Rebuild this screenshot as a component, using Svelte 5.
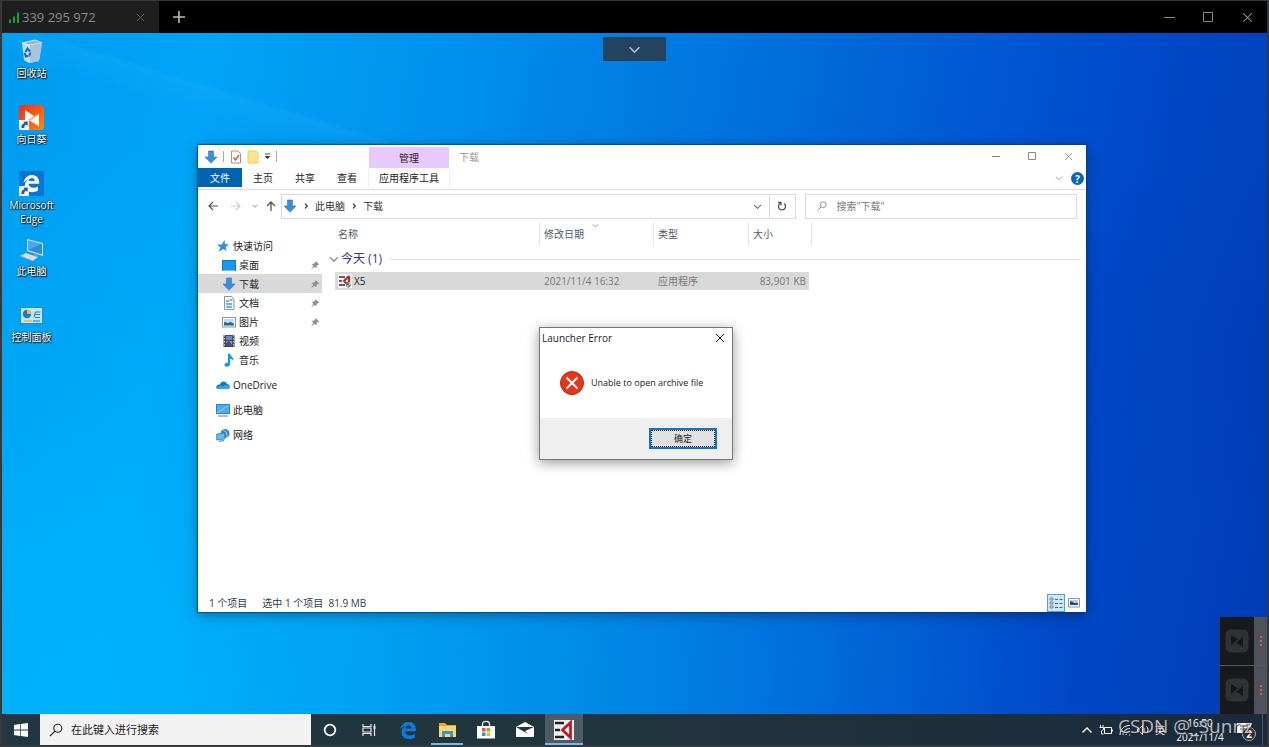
<script>
  const ribbonTabs = ['主页', '共享', '查看'];
  const desktopItems = [
    { icon: 'bin', label: '回收站' },
    { icon: 'sunflower', label: '向日葵' },
    { icon: 'edgeTile', label: 'Microsoft Edge' },
    { icon: 'laptop', label: '此电脑' },
    { icon: 'panel', label: '控制面板' }
  ];
  const quickItems = [
    { icon: 'desk', label: '桌面', pin: true },
    { icon: 'down', label: '下载', pin: true, active: true },
    { icon: 'doc', label: '文档', pin: true },
    { icon: 'pic', label: '图片', pin: true },
    { icon: 'video', label: '视频' },
    { icon: 'music', label: '音乐' }
  ];
  const rootItems = [
    { icon: 'cloud', label: 'OneDrive' },
    { icon: 'pc', label: '此电脑' },
    { icon: 'net', label: '网络' }
  ];
  const taskItems = [
    { icon: 'cortana', label: 'Cortana' },
    { icon: 'taskview', label: '任务视图' },
    { icon: 'edge', label: 'Microsoft Edge' },
    { icon: 'folder', label: '文件资源管理器', state: 'open' },
    { icon: 'store', label: 'Microsoft Store' },
    { icon: 'mail', label: '邮件' },
    { icon: 'x5', label: 'X5', state: 'current' }
  ];
  const files = [{ name: 'X5', date: '2021/11/4 16:32', type: '应用程序', size: '83,901 KB' }];
</script>

{#snippet chevron(size, dir)}
  <svg width={size} height={size} viewBox="0 0 12 12" fill="none" stroke="currentColor" stroke-width="1.4" aria-hidden="true">
    {#if dir === 'down'}<path d="M1.5 4l4.500 4.500L10.500 4" />
    {:else if dir === 'up'}<path d="M1.500 8.500L6 4l4.500 4.500" />
    {:else}<path d="M4.500 2.500L8 6l-3.500 3.500" stroke-width="1.800" />{/if}
  </svg>
{/snippet}

{#snippet cross(size)}
  <svg width={size} height={size} viewBox="0 0 10 10" fill="none" stroke="currentColor" aria-hidden="true"><path d="M1 1l8 8M9 1L1 9" /></svg>
{/snippet}

{#snippet glass(size)}
  <svg width={size} height={size} viewBox="0 0 14 14" fill="none" stroke="currentColor" stroke-width="1.1" aria-hidden="true"><circle cx="8.800" cy="5.200" r="4" /><path d="M6 8L1 13" /></svg>
{/snippet}

{#snippet downArrow(size)}
  <svg width={size} height={size} viewBox="0 0 14 14" aria-hidden="true"><path d="M4.500 1h5v6h3.500L7 13.300 1 7h3.500z" fill="#3a8edb" stroke="#2877c4" stroke-width=".6" /></svg>
{/snippet}

{#snippet shortcut()}
  <rect x="0" y="15" width="10" height="10" fill="#f3f5f8" /><path d="M2.500 23c-.5-3 1-4.500 3-4.800l-1-1.400 4.300-.2-.3 4.400-1.200-1.200c-1.600.2-2.200 1.200-2 3.200z" fill="#2456a5" />
{/snippet}

{#snippet fileIcon(size)}
  <svg width={size} height={size} viewBox="0 0 20 20" aria-hidden="true">
    <rect width="20" height="20" fill="#f4f0f0" />
    <path d="M1 3h9M1 10h5M1 17h9" stroke="#222" stroke-width="2.600" />
    <path d="M16.500 2.500v15L8.500 10z" fill="none" stroke="#b5202b" stroke-width="2.800" />
  </svg>
{/snippet}

{#snippet deskIcon(name)}
  <svg width="25" height="25" viewBox="0 0 25 25" aria-hidden="true">
    {#if name === 'bin'}
      <path d="M3 4l13-3 7 3-3 18-10 2-5-3z" fill="#c3dced" /><path d="M3 4l13-3 7 3-12 2z" fill="#8fb8d2" stroke="#e9f4fb" stroke-width=".8" /><path d="M11 6l12-2-3 18-9 2z" fill="#a9c6d9" />
      <path d="M6.500 13l2-3.500 2.500 3M5.500 14l1.500 3.500 2-.5M11.500 13.500l-1.500 4" fill="none" stroke="#1769c2" stroke-width="2" />
    {:else if name === 'sunflower'}
      <defs><linearGradient id="sun" x2="1" y2="1"><stop stop-color="#f02c18" /><stop offset="1" stop-color="#ff8a0c" /></linearGradient></defs>
      <rect width="25" height="25" rx="4" fill="url(#sun)" /><path d="M6 5l9 6-9 6z" fill="#fff" /><path d="M20 9v12l-9-5z" fill="#fff" /><path d="M7 16l12-7-7 7z" fill="#ffbfa6" />
      {@render shortcut()}
    {:else if name === 'edgeTile'}
      <rect width="25" height="25" fill="#0875d3" /><path d="M4.500 12C5.500 6.500 9 4 13 4c5 0 7.500 4 7.200 8.800H9.500c.2 4.500 6 5 9.500 2.800v4c-5 3-13 2-13.200-4.500-.1-3.400 1.700-5.700 4-6.800-2.500.6-4.200 1.900-5.300 3.700zm5.200-2h6.100c-.1-4-5.500-3.800-6.100 0z" fill="#fff" />
      {@render shortcut()}
    {:else if name === 'laptop'}
      <path d="M8 2l16 4v13L8 14z" fill="#cfe3ef" /><path d="M9 3.300l14 3.500v10.500L9 13z" fill="#4ba8ee" /><path d="M9 13L23 6.800v10.500z" fill="#2f8cdb" /><path d="M15 16l4 1v3l-4-1z" fill="#819aa9" /><path d="M1 19l6-3 12 4-5 4z" fill="#d7dfe3" stroke="#8ca1ae" stroke-width=".6" />
    {:else}
      <rect x="1.500" y="4.500" width="22" height="16" fill="#bce7fa" stroke="#3388b9" /><circle cx="8" cy="11" r="4.200" fill="#1979cd" /><path d="M8 11V6.800a4.200 4.200 0 0 1 4.200 4.200z" fill="#f5b92e" /><path d="M15 14l1.500-5h5M16 11.500h5M16 14.500h5" stroke="#347ba9" fill="none" /><path d="M5 18h8" stroke="#f5b92e" stroke-width="1.500" /><path d="M14 18h7" stroke="#1979cd" />
    {/if}
  </svg>
{/snippet}

{#snippet navIcon(name)}
  <svg width="14" height="14" viewBox="0 0 14 14" aria-hidden="true">
    {#if name === 'star'}<path d="M8.500 1l.5 4 4 .5-3.300 2.500 1 4-3.400-2L2.500 13l2-4.500L1 5.800l4.800-.3z" fill="#2e91dc" />
    {:else if name === 'desk'}<rect x=".5" y="2.500" width="13" height="10" fill="#1898ee" stroke="#0d78c9" /><path d="M1 12.500h12" stroke="#63c5ff" />
    {:else if name === 'down'}<path d="M4.500 1h5v6h3.500L7 13.300 1 7h3.500z" fill="#3a8edb" stroke="#2877c4" stroke-width=".6" />
    {:else if name === 'doc'}<path d="M2.500.5h7l2.500 3v10H2.500z" fill="#fff" stroke="#87949d" /><path d="M4 5h3M4 8h6M4 11h6M7.500 4h3" stroke="#3b9ad6" stroke-width="1.400" />
    {:else if name === 'pic'}<rect x=".5" y="2.500" width="13" height="9.500" fill="#fff" stroke="#89969f" /><path d="M2 4h10v6.500H2z" fill="#b9dff4" /><path d="M2 7l4 1 3-1 3 2v1.500H2z" fill="#27678e" />
    {:else if name === 'video'}<rect x="1.500" y="1" width="11" height="12" fill="#444854" /><path d="M2.500 1v12M11.500 1v12" stroke="#bfc5ce" stroke-dasharray="1.500 1.500" /><path d="M4 2h6v4H4z" fill="#5c8bd0" /><path d="M4 7h6v5H4z" fill="#c48f47" /><path d="M4 9l3-2 3 4v1H4z" fill="#364ea0" />
    {:else if name === 'music'}<path d="M6 .5h2c0 3 4.500 3.500 3.300 7.500C10.800 6.500 9.500 6 8 5.800V11c0 3.500-5.500 3.500-5.500 1 0-1.900 2-2.500 3.500-2z" fill="#1497e3" />
    {:else if name === 'cloud'}<path d="M1 11c-2-3 1-5 3-4.500C5 2.500 10 2.500 11 6c3 0 3.500 4 1.500 5z" fill="#0b73c9" /><path d="M1 11c0-3 4-4 6-2.500C9 6 14 7 13.500 10c0 1-1 1-1 1z" fill="#35a4eb" />
    {:else if name === 'pc'}<rect x=".5" y="1.500" width="13" height="9" fill="#45b1f3" stroke="#3b7da9" /><path d="M1 10L13 2" stroke="#82d0ff" /><path d="M2 13h10" stroke="#8a98a1" stroke-width="1.300" />
    {:else}<circle cx="9" cy="5.500" r="4.500" fill="#3a87c4" /><path d="M7 2c3 1 4 3 4 7" stroke="#a5d6f2" fill="none" /><path d="M.7 6l8-1v6l-8 1z" fill="#5ec0f1" stroke="#2e7eaf" stroke-width=".8" /><path d="M3 13.300l5-.7" stroke="#60717d" />{/if}
  </svg>
{/snippet}

{#snippet pinIcon()}
  <svg class="pin" width="10" height="10" viewBox="0 0 10 10" aria-hidden="true"><path d="M5.500 1L9.300 4.500 7.800 5 6.500 6.500 6.300 8.500 4.400 6.800 1 9.500 3.300 5.800 1.500 4l2-.3L5.200 2.500z" fill="#8b9298" /></svg>
{/snippet}

{#snippet taskIcon(name)}
  {#if name === 'x5'}{@render fileIcon(20)}
  {:else}
  <svg width="20" height="20" viewBox="0 0 20 20" fill="none" aria-hidden="true">
    {#if name === 'cortana'}<circle cx="10" cy="10" r="5.300" stroke="#f2f5f6" stroke-width="1.800" />
    {:else if name === 'taskview'}<path d="M4 4v2.500h8V4M4 16v-2.500h8V16M4 8h8v4H4zM15.500 4v2M15.500 9v7" stroke="#e6eaec" stroke-width="1.200" /><path d="M14.500 6h2v3h-2z" fill="#e6eaec" />
    {:else if name === 'edge'}<path d="M2 9.500C3 4.500 6.500 2 10.500 2c5.300 0 7.800 4 7.300 9.200H7c.2 4.800 6.300 5.100 9.800 2.800v3.800C11.500 20.500 3.500 19 3.500 12.500c0-3.300 1.700-5.500 4-6.500-2.500.6-4.400 1.800-5.500 3.500zM7.200 8.500h6.300c0-4.200-5.700-4.200-6.300 0z" fill="#0b7bdc" />
    {:else if name === 'folder'}<path d="M2 3h6l2 2h9v12H2z" fill="#e5a82e" /><path d="M2 6h17v11H2z" fill="#ffd66e" /><path d="M5 17v-6h11v6h-3v-3H8v3z" fill="#3d92d4" />
    {:else if name === 'store'}<path d="M6.500 6V4c0-3.500 7-3.500 7 0v2" stroke="#eee" stroke-width="1.300" /><path d="M1 6h18v12.500H1z" fill="#fff" /><path d="M6 8h3.500v3.500H6z" fill="#ed5331" /><path d="M10.500 8H14v3.500h-3.500z" fill="#7db928" /><path d="M6 12.500h3.500V16H6z" fill="#18a0e1" /><path d="M10.500 12.500H14V16h-3.500z" fill="#f6b81c" />
    {:else}<path d="M1 7l9-5 9 5v10H1z" fill="#fff" /><path d="M1 7h18l-9 4 3 3z" fill="#25343d" />{/if}
  </svg>
  {/if}
{/snippet}

{#snippet remoteLogo()}
  <svg width="24" height="24" viewBox="0 0 24 24" aria-hidden="true"><rect x=".5" y=".5" width="23" height="23" rx="5" fill="#303235" /><path d="M6 6l8 5-8 7zM18 6v12l-8-5z" fill="#141618" /><path d="M6 17L18 7" stroke="#303235" stroke-width="1.500" /></svg>
{/snippet}

<div class="client">
  <header class="session-bar">
    <div class="session">
      <svg width="12" height="12" viewBox="0 0 12 12" aria-hidden="true"><path d="M2 12V8.500M6 12V5.500M10 12V1.500" stroke="#12b52c" stroke-width="1.800" /></svg>
      <span>339 295 972</span>
      <button class="close-tab" aria-label="关闭会话">{@render cross(9)}</button>
    </div>
    <button class="add" aria-label="新建会话"><svg width="12" height="12" viewBox="0 0 12 12" stroke="#bbb" stroke-width="1.600" aria-hidden="true"><path d="M6 0v12M0 6h12" /></svg></button>
    <div class="frame-controls">
      <button aria-label="最小化"><svg width="11" height="11" viewBox="0 0 11 11" stroke="currentColor" aria-hidden="true"><path d="M0 5.500h11" /></svg></button>
      <button aria-label="最大化"><svg width="11" height="11" viewBox="0 0 11 11" fill="none" stroke="currentColor" aria-hidden="true"><path d="M.5.5h9v9h-9z" /></svg></button>
      <button aria-label="关闭">{@render cross(11)}</button>
    </div>
  </header>

  <main class="desktop">
    <div class="shortcuts">
      {#each desktopItems as item}
        <button class="shortcut">{@render deskIcon(item.icon)}<span>{item.label}</span></button>
      {/each}
    </div>

    <button class="toolbar-handle" aria-label="展开工具栏">{@render chevron(13, 'down')}</button>

    <section class="explorer" aria-label="下载">
      <div class="caption">
        <div class="quick-tools">
          {@render downArrow(14)}
          <i></i>
          <button aria-label="属性"><svg width="12" height="14" viewBox="0 0 12 14" fill="none" aria-hidden="true"><path d="M1.500 1h6.500l2.500 2.500v9.500h-9z" fill="#fff" stroke="#999" /><path d="M3.500 7.500l2 2.500L9 5" stroke="#db5a34" stroke-width="1.400" /></svg></button>
          <button aria-label="新建文件夹"><svg width="12" height="14" viewBox="0 0 12 14" aria-hidden="true"><path d="M1 1h8l2 2v10H1z" fill="#fce58b" stroke="#edcc62" /></svg></button>
          <button aria-label="自定义快速访问工具栏"><svg width="7" height="7" viewBox="0 0 7 7" aria-hidden="true"><path d="M1 1h5M1.500 3.500h4l-2 2z" stroke="#222" fill="#222" stroke-width=".8" /></svg></button>
          <i></i>
        </div>
        <div class="context">管理</div>
        <h1>下载</h1>
        <div class="window-controls">
          <button aria-label="最小化"><svg width="9" height="9" viewBox="0 0 9 9" stroke="currentColor" aria-hidden="true"><path d="M0 4.500h8" /></svg></button>
          <button aria-label="最大化"><svg width="9" height="9" viewBox="0 0 9 9" fill="none" stroke="currentColor" aria-hidden="true"><path d="M.5.5h7v7h-7z" /></svg></button>
          <button aria-label="关闭">{@render cross(9)}</button>
        </div>
      </div>
      <nav class="ribbon" aria-label="功能区">
        <button class="file">文件</button>
        {#each ribbonTabs as tab}<button>{tab}</button>{/each}
        <button class="app-tools">应用程序工具</button>
        <button class="collapse" aria-label="展开功能区">{@render chevron(8, 'down')}</button>
        <button class="help" aria-label="帮助">?</button>
      </nav>
      <div class="address-row">
        <div class="history">
          <button aria-label="后退"><svg width="10" height="10" viewBox="0 0 10 10" fill="none" stroke="#555" stroke-width="1.200" aria-hidden="true"><path d="M10 5H1M5 1L1 5l4 4" /></svg></button>
          <button aria-label="前进"><svg width="10" height="10" viewBox="0 0 10 10" fill="none" stroke="#ccc" stroke-width="1.200" aria-hidden="true"><path d="M0 5h9M5 1l4 4-4 4" /></svg></button>
          <button class="recent" aria-label="最近位置">{@render chevron(6, 'down')}</button>
          <button aria-label="上移"><svg width="10" height="10" viewBox="0 0 10 10" fill="none" stroke="#555" stroke-width="1.300" aria-hidden="true"><path d="M5 10V1M1 5l4-4 4 4" /></svg></button>
        </div>
        <div class="path">
          {@render downArrow(14)}
          {@render chevron(8, 'right')}
          <button>此电脑</button>
          {@render chevron(8, 'right')}
          <button>下载</button>
          <button class="drop" aria-label="以前的位置">{@render chevron(9, 'down')}</button>
          <button class="refresh" aria-label="刷新"><svg width="10" height="10" viewBox="0 0 10 10" fill="none" stroke="#555" stroke-width="1.300" aria-hidden="true"><path d="M7 2.500a3.500 3.500 0 1 1-4 0M1 1.500h3v3" /></svg></button>
        </div>
        <label class="find">{@render glass(10)}<input aria-label="搜索下载" placeholder={'搜索"下载"'} /></label>
      </div>
      <div class="body">
        <nav class="tree" aria-label="导航窗格">
          <a href="#quick">{@render navIcon('star')}快速访问</a>
          {#each quickItems as item}
            <a href="#{item.icon}" class="child" class:active={item.active}>{@render navIcon(item.icon)}{item.label}{#if item.pin}{@render pinIcon()}{/if}</a>
          {/each}
          {#each rootItems as item}
            <a href="#{item.icon}" class="root">{@render navIcon(item.icon)}{item.label}</a>
          {/each}
        </nav>
        <table>
          <colgroup><col class="c-name" /><col class="c-date" /><col class="c-type" /><col class="c-size" /><col /></colgroup>
          <thead><tr><th>名称</th><th class="sorted">修改日期<span>{@render chevron(7, 'down')}</span></th><th>类型</th><th>大小</th><td></td></tr></thead>
          <tbody>
            <tr class="group"><th colspan="5"><div>{@render chevron(10, 'down')}<span>今天 (1)</span><hr /></div></th></tr>
            {#each files as file}
              <tr class="file-row">
                <td><div>
                  <svg width="14" height="14" viewBox="0 0 14 14" aria-hidden="true"><path d="M0 0h14v14H0z" fill="#f5f2f2" /><path d="M1 3h6M1 7h3M1 11h6" stroke="#333" stroke-width="1.600" /><path d="M11 2v8M11 2L6 7l3 3" fill="none" stroke="#c6202e" stroke-width="2" /><path d="M8 8h5v3l-2.500 3L8 12z" fill="#2372c5" /><path d="M10.500 8H13v3h-2.500zM8 11h2.500v3z" fill="#f3bf2d" /></svg>
                  {file.name}
                </div></td>
                <td>{file.date}</td><td>{file.type}</td><td>{file.size}</td><td></td>
              </tr>
            {/each}
          </tbody>
        </table>
      </div>
      <footer class="status">
        <span>1 个项目</span><span>选中 1 个项目&nbsp; 81.9 MB</span>
        <div>
          <button class="on" aria-label="详细信息"><svg width="14" height="12" viewBox="0 0 14 12" stroke="#4c6878" fill="none" aria-hidden="true"><path d="M1 1h3v2H1zM1 5h3v2H1zM1 9h3v2H1z" stroke-width=".7" /><path d="M6 2.500h3M10.500 2.500h3M6 6.500h3M10.500 6.500h3M6 10.500h3M10.500 10.500h3" /></svg></button>
          <button aria-label="大图标"><svg width="12" height="10" viewBox="0 0 12 10" aria-hidden="true"><path d="M.5.5h11v8.500H.5z" fill="#fff" stroke="#8d949a" /><path d="M2 2h8v5H2z" fill="#a9d2f0" /><path d="M2 3l3 1 1 1h4v2H2z" fill="#244d80" /></svg></button>
        </div>
      </footer>
    </section>

    <div class="dialog" role="alertdialog" aria-labelledby="dialog-title" aria-describedby="dialog-text">
      <div class="dialog-head"><h2 id="dialog-title">Launcher Error</h2><button aria-label="关闭">{@render cross(10)}</button></div>
      <div class="dialog-body">
        <svg width="26" height="26" viewBox="0 0 26 26" aria-hidden="true"><circle cx="13" cy="13" r="11.500" fill="#ea3418" stroke="#a92c1c" /><path d="M7.500 7.500l11 11M18.500 7.500l-11 11" stroke="#fff" stroke-width="2" /></svg>
        <p id="dialog-text">Unable to open archive file</p>
      </div>
      <div class="dialog-foot"><button>确定</button></div>
    </div>

    <aside class="remote-tools">
      {#each [1, 2] as n}
        <div class="remote"><button aria-label="远程会话 {n}">{@render remoteLogo()}</button><span><b></b><b></b><b></b></span></div>
      {/each}
    </aside>
  </main>

  <footer class="taskbar">
    <button class="start" aria-label="开始"><svg width="14" height="14" viewBox="0 0 14 14" fill="#fff" aria-hidden="true"><path d="M0 2l6-.9v5.500H0zM6.700 1L14 0v6.600H6.700zM0 7.400h6v5.500L0 12zM6.700 7.400H14V14l-7.300-1z" /></svg></button>
    <label class="task-search">{@render glass(14)}<input aria-label="搜索" placeholder="在此键入进行搜索" /></label>
    <div class="apps">
      {#each taskItems as item}<button class={item.state} aria-label={item.label}>{@render taskIcon(item.icon)}</button>{/each}
    </div>
    <div class="tray">
      <button aria-label="显示隐藏的图标">{@render chevron(12, 'up')}</button>
      <svg width="14" height="12" viewBox="0 0 14 12" fill="none" stroke="currentColor" aria-hidden="true"><path d="M5.500 3.500h7v6h-7zM13.500 5.500v2M1.500 1v2M4 1v2M.5 3.500h4v2l-2 1.500v3h2" /></svg>
      <svg width="12" height="12" viewBox="0 0 12 12" fill="none" stroke="currentColor" aria-hidden="true"><path d="M1 11C1 5 5 1.500 11 1.500M4 11c0-4 3-6.500 7-6.500M7 11c0-2 2-3.500 4-3.500M10 11h1" /></svg>
      <svg width="12" height="12" viewBox="0 0 12 12" fill="none" stroke="currentColor" aria-hidden="true"><path d="M.5 4.500h2l3-3v9l-3-3h-2zM7.500 4v4M9.500 2.500c2 2 2 5 0 7" /></svg>
      <span class="ime">英</span>
      <time>16:50<br />2021/11/4</time>
      <button class="notes" aria-label="2 条新通知"><svg width="15" height="14" viewBox="0 0 15 14" aria-hidden="true"><path d="M0 0h14v10H8l-3 3v-3H0z" fill="#fff" /><path d="M3 3h8M3 6h8" stroke="#203341" /></svg><b>2</b></button>
      <button class="show-desktop" aria-label="显示桌面"></button>
    </div>
    <div class="watermark">CSDN @_Sunnz</div>
  </footer>
</div>

<style>
  :global(body) { margin: 0; background: #000; }
  .client, .client * { box-sizing: border-box; }
  .client {
    min-height: 100vh; display: flex; flex-direction: column; overflow: hidden;
    border: solid #36393c; border-width: 1px 2px 2px;
    font: 10px/14px "Open Sans", "Noto Sans CJK SC", sans-serif; color: #222;
  }
  button { font: inherit; color: inherit; background: none; border: 0; padding: 0; margin: 0; display: flex; align-items: center; justify-content: center; }
  input { font: inherit; color: inherit; background: none; border: 0; padding: 0; min-width: 0; flex: 1; outline: 0; }
  svg { flex: none; display: block; }
  h1, h2, p { margin: 0; font: inherit; }
  a { color: inherit; text-decoration: none; }

  .session-bar { height: 32px; display: flex; background: #000; color: #8b8b8b; }
  .session { width: 157px; display: flex; align-items: center; gap: 2px; padding: 0 14px 0 6px; background: #1e1e1e; font-size: 13px; line-height: 18px; }
  .close-tab { margin-left: auto; color: #666; }
  .add { width: 40px; }
  .frame-controls { margin-left: auto; display: flex; color: #888; }
  .frame-controls button { width: 39px; }

  .desktop {
    flex: 1; position: relative; min-height: 640px; overflow: hidden;
    background:
      linear-gradient(197deg, transparent 39%, rgba(120, 210, 255, .07) 40%, transparent 46%) 0 0 / 50% 40% no-repeat,
      radial-gradient(ellipse at 0% 100%, rgba(0, 190, 255, .6), transparent 60%),
      radial-gradient(ellipse at 100% 45%, rgba(0, 35, 150, .08), transparent 35%),
      linear-gradient(100deg, #009cf0 0%, #00a4f8 15%, #0092ee 32%, #0078e0 50%, #005cd4 69%, #004aca 82%, #003bb6 100%);
  }
  .shortcuts { width: 59px; padding-top: 6px; display: grid; grid-auto-rows: 66px; }
  .shortcut { flex-direction: column; justify-content: flex-start; gap: 2px; color: #fff; text-shadow: 1px 1px 1px #000, 0 0 2px #000; }
  .toolbar-handle { position: absolute; top: 4px; left: 50%; width: 63px; height: 24px; margin-left: -32px; background: #24435f; color: #b9c5cf; }

  .explorer { position: absolute; top: 112px; left: 196px; right: 181px; bottom: 102px; display: flex; flex-direction: column; background: #fff; box-shadow: 0 0 1px 1px rgba(0, 60, 110, .6), 0 3px 12px rgba(0, 0, 0, .35); }
  .caption { height: 23px; display: flex; align-items: center; }
  .quick-tools { width: 171px; display: flex; align-items: center; gap: 5px; padding-left: 6px; }
  .quick-tools i { width: 1px; height: 11px; margin-right: 1px; background: #aaa; }
  .context { width: 80px; align-self: stretch; margin-top: 2px; display: grid; place-items: center; background: #e7c9fb; }
  h1 { margin-left: 10px; color: #9a9a9a; }
  .window-controls { margin-left: auto; display: flex; color: #888; }
  .window-controls button { width: 36px; height: 20px; }
  .ribbon { height: 22px; display: flex; border-bottom: 1px solid #dadbdc; }
  .ribbon button { width: 42px; height: 19px; }
  .ribbon .file { width: 44px; background: #0063b1; color: #fff; }
  .ribbon .app-tools { width: 82px; border: solid #eee; border-width: 0 1px; }
  .ribbon .collapse { width: 20px; margin-left: auto; color: #999; }
  .ribbon .help { width: 13px; height: 13px; margin: 4px 2px 0; border-radius: 50%; background: #0b65b9; color: #fff; font-weight: 700; }
  .address-row { height: 32px; display: flex; align-items: center; padding-right: 9px; }
  .history { width: 83px; display: flex; align-items: center; gap: 13px; padding-left: 10px; color: #666; }
  .history .recent { margin: 0 -5px 0 -2px; }
  .path { flex: 1; height: 25px; display: flex; align-items: center; gap: 5px; border: 1px solid #d9d9d9; padding-left: 1px; color: #333; }
  .path .drop { margin: 0 2px 0 auto; color: #555; }
  .path .refresh { width: 26px; align-self: stretch; border-left: 1px solid #d9d9d9; }
  .find { width: 31%; height: 25px; margin-left: 9px; display: flex; align-items: center; gap: 10px; padding-left: 11px; border: 1px solid #d9d9d9; color: #777; }
  input::placeholder { color: inherit; opacity: 1; }

  .body { flex: 1; display: flex; min-height: 0; }
  .tree { width: 124px; padding-top: 14px; }
  .tree a { height: 19px; display: flex; align-items: center; gap: 3px; padding-left: 18px; }
  .tree .child { padding: 0 2px 0 24px; }
  .tree .active { background: #d9d9d9; }
  .tree .root { margin-top: 6px; }
  .pin { margin-left: auto; }
  table { flex: 1; align-self: flex-start; width: 0; margin: 0 5px 0 7px; table-layout: fixed; border-collapse: separate; border-spacing: 0; }
  .c-name { width: 211px; } .c-date { width: 114px; } .c-type { width: 95px; } .c-size { width: 63px; }
  th, td { padding: 0 0 0 4px; text-align: left; font-weight: 400; }
  thead th { height: 24px; color: #4e5b68; border-right: 1px solid #e5e5e5; position: relative; }
  thead th:first-child { padding-left: 9px; }
  .sorted span { position: absolute; left: 52px; top: 0; color: #888; }
  .group th { height: 26px; padding: 0; font-size: 12px; line-height: 16px; color: #34358b; }
  .group div { display: flex; align-items: center; gap: 2px; }
  .group svg { color: #777; }
  hr { flex: 1; height: 1px; margin: 0 0 0 6px; border: 0; background: #e3e3e3; }
  .file-row td { height: 18px; background: #d9d9d9; color: #777; }
  .file-row td:first-child { border-left: 6px solid #fff; padding-left: 3px; color: #222; }
  .file-row td:first-child div { display: flex; align-items: center; gap: 2px; }
  .file-row td:nth-child(4) { text-align: right; padding-right: 3px; border-right: 3px solid #fff; }
  .file-row td:last-child { background: none; }
  .status { height: 19px; display: flex; align-items: center; gap: 15px; padding: 0 3px 0 11px; color: #2c3e50; }
  .status div { margin-left: auto; display: flex; }
  .status button { width: 18px; height: 18px; }
  .status .on { background: #cce8f6; border: 1px solid #4da6c7; }

  .dialog { position: absolute; top: 294px; left: 537px; width: 194px; background: #fff; border: 1px solid #777; box-shadow: 0 3px 12px rgba(0, 0, 0, .4); }
  .dialog-head { height: 20px; display: flex; align-items: center; justify-content: space-between; padding: 0 7px 0 2px; }
  .dialog-body { height: 70px; display: flex; align-items: center; gap: 6px; padding-left: 19px; }
  .dialog-body p { font-size: 9px; }
  .dialog-foot { height: 41px; display: flex; align-items: center; justify-content: flex-end; padding-right: 15px; background: #efefef; }
  .dialog-foot button { width: 68px; height: 21px; background: #e1e1e1; border: 2px solid #0878ce; outline: 1px dotted #222; outline-offset: -3px; font-size: 9px; }

  .remote-tools { position: absolute; right: 0; bottom: 0; display: grid; gap: 1px; background: #55585c; }
  .remote { width: 48px; height: 48px; display: flex; background: #17191d; border-left: 1px solid #33363b; }
  .remote button { flex: 1; }
  .remote span { width: 13px; display: grid; align-content: center; justify-content: center; gap: 2px; background: #50515b; }
  .remote b { width: 2px; height: 2px; background: #b96b5c; }

  .taskbar { height: 31px; display: flex; position: relative; background: linear-gradient(90deg, #223741, #20343e 50%, #1a2a3c); color: #fff; }
  .start { width: 38px; }
  .task-search { width: 271px; display: flex; align-items: center; gap: 8px; padding-left: 9px; background: #f2f2f2; color: #222; font-size: 11px; line-height: 16px; }
  .apps { display: flex; gap: 1px; }
  .apps button { width: 38px; }
  .apps .open { box-shadow: inset 0 -2px #76b9ed; width: 32px; margin: 0 3px; }
  .apps .current { background: #4c5b64; box-shadow: inset 0 -2px #76b9ed; }
  .tray { margin-left: auto; display: flex; align-items: center; gap: 6px; }
  .tray time { width: 58px; text-align: center; line-height: 14px; }
  .notes { position: relative; margin-left: 2px; }
  .notes b { position: absolute; left: 5px; top: 4px; width: 14px; height: 14px; border-radius: 50%; background: #2b3037; border: 1px solid #aaa; line-height: 12px; }
  .show-desktop { width: 5px; height: 31px; margin-left: 4px; border-left: 1px solid #4a5866; }
  .watermark { position: absolute; right: 14px; top: 0; font-size: 19px; line-height: 24px; color: #cfd2d5; opacity: .85; text-shadow: 1px 1px 1px #222; pointer-events: none; }
</style>
